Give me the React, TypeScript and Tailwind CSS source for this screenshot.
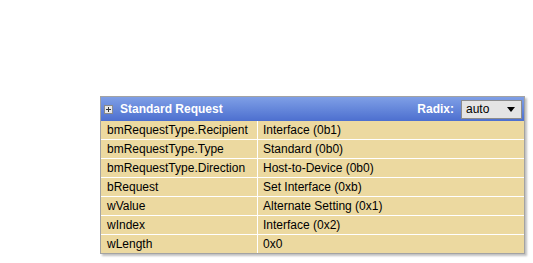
import React from "react";

const rows: [string, string][] = [
  ["bmRequestType.Recipient", "Interface (0b1)"],
  ["bmRequestType.Type", "Standard (0b0)"],
  ["bmRequestType.Direction", "Host-to-Device (0b0)"],
  ["bRequest", "Set Interface (0xb)"],
  ["wValue", "Alternate Setting (0x1)"],
  ["wIndex", "Interface (0x2)"],
  ["wLength", "0x0"],
];

export default function App() {
  return (
    <div
      className="w-[533px] h-[263px] bg-white pt-[96px] pl-[100px]"
      style={{ fontFamily: '"Liberation Sans", Arial, sans-serif' }}
    >
      <div className="w-[425px] border border-[#a3a3a3] shadow-[2px_2px_2px_rgba(0,0,0,0.25)] bg-white">
        <div className="h-[24px] flex items-center justify-between pl-[3px] pr-[2px] bg-gradient-to-b from-[#7f9fe6] to-[#4d6fcf]">
          <div className="flex items-center gap-[7px]">
            <div className="w-[9px] h-[9px] bg-[#e8e8e8] border border-[#8a8a8a] flex items-center justify-center relative">
              <div className="absolute w-[5px] h-[1px] bg-[#333]" />
              <div className="absolute w-[1px] h-[5px] bg-[#333]" />
            </div>
            <span className="text-white font-bold text-[12px]">Standard Request</span>
          </div>
          <div className="flex items-center gap-[7px]">
            <span className="text-white font-bold text-[12px]">Radix:</span>
            <div className="w-[61px] h-[19px] bg-[#e4e4e4] border border-[#8c8c8c] flex items-center justify-between pl-[4px] pr-[6px] text-[12px] text-black">
              <span>auto</span>
              <svg width="8" height="5" viewBox="0 0 8 5">
                <path d="M0 0 L8 0 L4 5 Z" fill="#000" />
              </svg>
            </div>
          </div>
        </div>
        <div className="grid grid-cols-[156px_1fr] gap-px bg-white">
          {rows.map(([k, v]) => (
            <React.Fragment key={k}>
              <div className="h-[18px] bg-[#ecd9a0] pl-[6px] flex items-center text-[12px] text-black">{k}</div>
              <div className="h-[18px] bg-[#ecd9a0] pl-[5px] flex items-center text-[12px] text-black">{v}</div>
            </React.Fragment>
          ))}
        </div>
      </div>
    </div>
  );
}
